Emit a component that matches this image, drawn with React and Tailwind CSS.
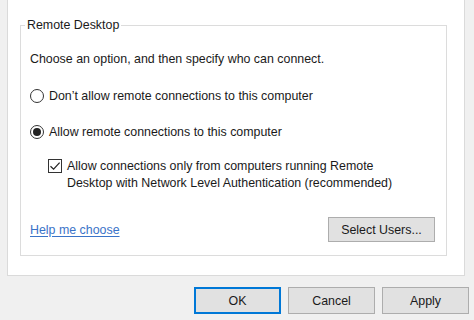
import React from "react";

function Radio({ checked, label }) {
  return (
    <div className="flex items-center h-4">
      <span className="flex items-center justify-center w-[14px] h-[14px] rounded-full border border-[#333] bg-white">
        {checked && <span className="w-[8px] h-[8px] rounded-full bg-[#222]" />}
      </span>
      <span className="ml-[5px]">{label}</span>
    </div>
  );
}

function Button({ children, primary, className = "" }) {
  return (
    <button
      className={
        "flex items-center justify-center bg-[#e1e1e1] text-[#1a1a1a] " +
        (primary ? "border-2 border-[#0078d7] " : "border border-[#adadad] ") +
        className
      }
    >
      {children}
    </button>
  );
}

export default function App() {
  return (
    <div
      className="w-[474px] h-[320px] bg-[#f0f0f0] text-[12.4px] leading-4 text-[#1a1a1a] flex flex-col overflow-hidden"
      style={{ fontFamily: '"Liberation Sans", Arial, sans-serif' }}
    >
      <div className="ml-[7px] mr-[9px] h-[276px] bg-white border border-t-0 border-[#dadada] pl-[12px] pr-[17px] pt-[17px]">
        <fieldset className="border border-[#dcdcdc] pl-[9px] pb-[13px]">
          <legend className="-ml-[5px] px-[2px] leading-4">Remote Desktop</legend>
          <div className="mt-[18px]">Choose an option, and then specify who can connect.</div>
          <div className="mt-[21px]">
            <Radio label="Don’t allow remote connections to this computer" />
          </div>
          <div className="mt-[20px]">
            <Radio checked label="Allow remote connections to this computer" />
          </div>
          <div className="mt-[18px] ml-[18px] flex items-start">
            <span className="mt-[1px] flex items-center justify-center w-[14px] h-[14px] border border-[#333] bg-white shrink-0">
              <svg width="12" height="12" viewBox="0 0 12 12" fill="none">
                <path d="M1.5 6.2 L4.6 9.2 L10.6 2.6" stroke="#222" strokeWidth="1.2" />
              </svg>
            </span>
            <span className="ml-[5px] leading-[17px]">
              Allow connections only from computers running Remote
              <br />
              Desktop with Network Level Authentication (recommended)
            </span>
          </div>
          <div className="mt-[25px] flex items-center justify-between pr-[11px]">
            <a className="text-[#3a73c8] underline underline-offset-2 cursor-pointer">
              Help me choose
            </a>
            <Button className="w-[107px] h-[25px]">Select Users...</Button>
          </div>
        </fieldset>
      </div>
      <div className="flex justify-end gap-[7px] mt-[11px] mr-[5px]">
        <Button primary className="w-[87px] h-[27px]">OK</Button>
        <Button className="w-[87px] h-[27px]">Cancel</Button>
        <Button className="w-[87px] h-[27px]">Apply</Button>
      </div>
    </div>
  );
}
